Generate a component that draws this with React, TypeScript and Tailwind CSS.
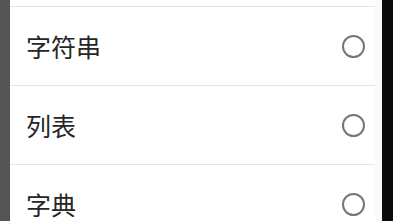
const items = ['字符串', '列表', '字典']

export default function App() {
  return (
    <div className="flex h-[221px] w-[393px] overflow-hidden bg-white">
      <div className="w-[10px] shrink-0 bg-[#545454]" />
      <div className="flex min-w-0 flex-1 flex-col">
        <div className="h-[6px] shrink-0" />
        {items.map((item) => (
          <div
            key={item}
            className="flex h-[79px] shrink-0 items-center justify-between border-t-[1.5px] border-[#e3e3e3] pl-[16px] pr-[10px]"
          >
            <span
              className="text-[25px] leading-none text-[#262626]"
              style={{ fontFamily: '"Noto Sans CJK SC", "Noto Sans", sans-serif' }}
            >
              {item}
            </span>
            <span className="block h-[23px] w-[23px] rounded-full border-2 border-[#767676]" />
          </div>
        ))}
      </div>
      <div className="w-[7px] shrink-0 bg-[#fafafa]" />
      <div className="w-[11px] shrink-0 bg-[#0a0a0a]" />
    </div>
  )
}
